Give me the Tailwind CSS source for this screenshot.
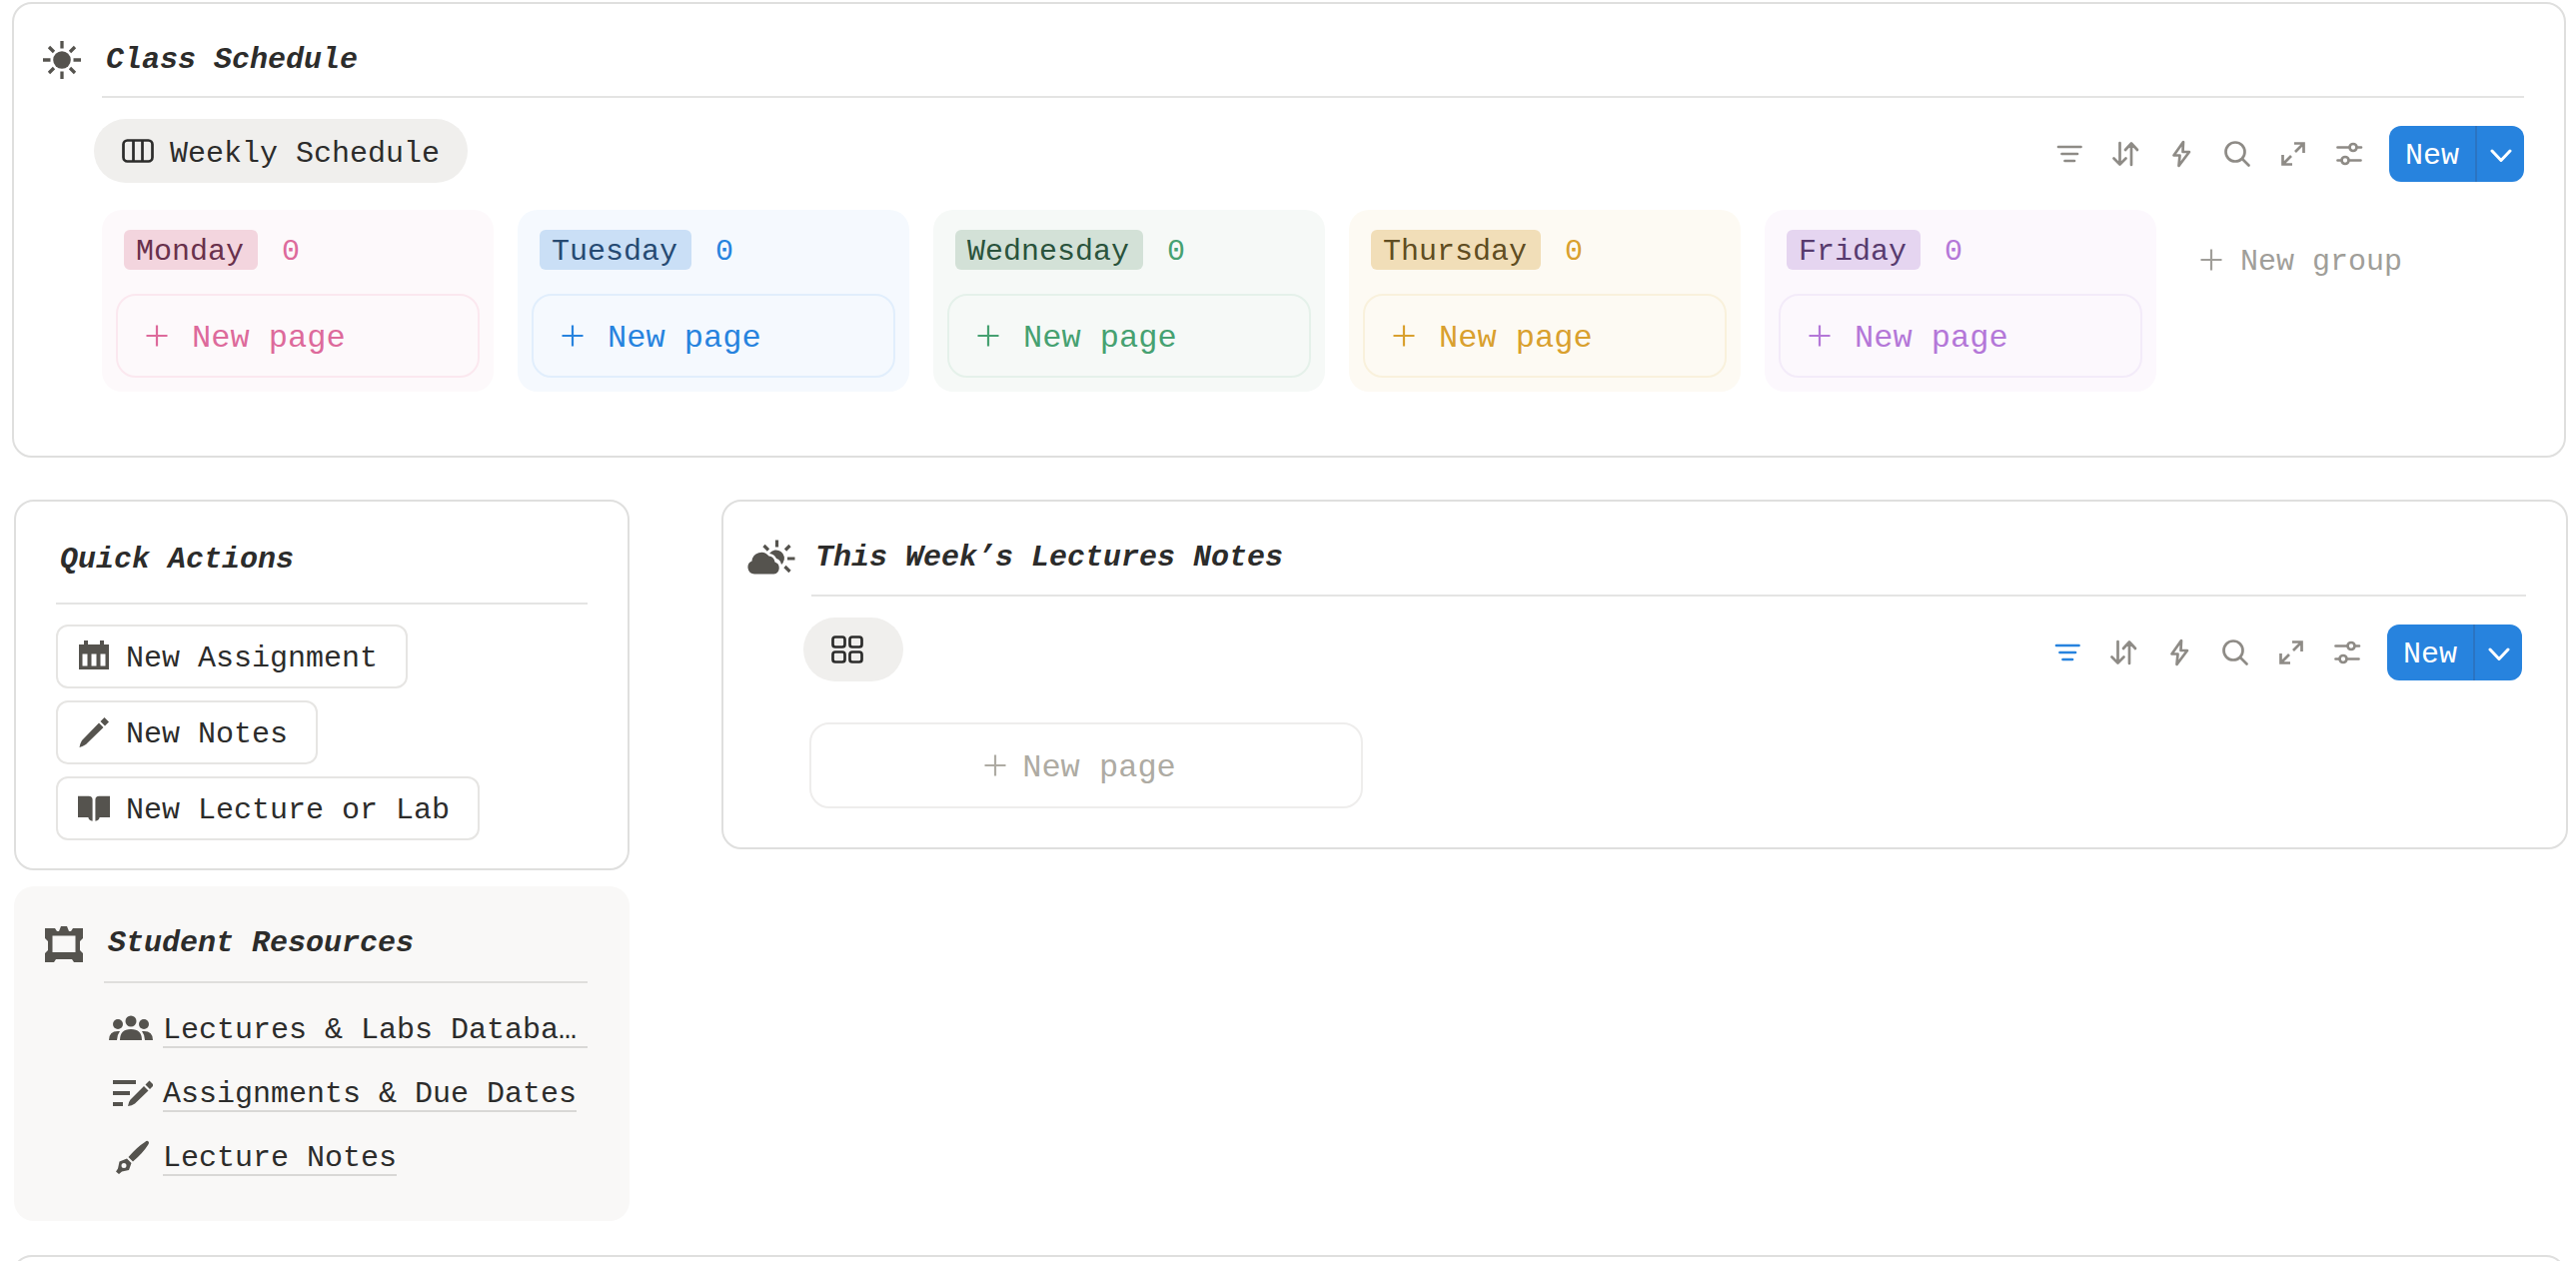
<!DOCTYPE html>
<html lang="en">
<head>
  <meta charset="UTF-8">
  <meta name="viewport" content="width=device-width, initial-scale=1.0">
  <title>Class Dashboard</title>
  <script src="https://cdn.jsdelivr.net/npm/@tailwindcss/browser@4"></script>
</head>
<body class="flex flex-col h-screen overflow-hidden bg-white pt-[2px] text-[#2c2c2b] text-[30px] leading-9 font-['Liberation_Mono',monospace]">

  <!-- shared icons -->
  <svg class="hidden">
    <symbol id="plus" viewBox="0 0 22 22"><path d="M11 0.5v21M0.5 11h21" fill="none" stroke="currentColor" stroke-width="2.2"/></symbol>
    <symbol id="filter" viewBox="0 0 32 32"><path d="M5 9h22.500M8.500 16h15.500M11.500 23h9.500" fill="none" stroke="currentColor" stroke-width="2.7" stroke-linecap="round"/></symbol>
    <symbol id="sort" viewBox="0 0 32 32"><path d="M10.500 5v21M4.500 20.500l6 6 6-6M22 27V5.500M16 12l6-6.500 6 6.500" fill="none" stroke="currentColor" stroke-width="2.7" stroke-linecap="round" stroke-linejoin="round"/></symbol>
    <symbol id="bolt" viewBox="0 0 32 32"><path d="M18 4L8.500 17.500h6L13.500 28 24 14h-6.500z" fill="none" stroke="currentColor" stroke-width="2.7" stroke-linejoin="round"/></symbol>
    <symbol id="search" viewBox="0 0 32 32"><g fill="none" stroke="currentColor" stroke-width="2.7" stroke-linecap="round"><circle cx="14" cy="14" r="9.5"/><path d="M21 21l6.500 6.500"/></g></symbol>
    <symbol id="expand" viewBox="0 0 32 32"><path d="M18 14l8-8M17 5.500h9.500V15M14 18l-8 8M5.500 17v9.500H15" fill="none" stroke="currentColor" stroke-width="2.7"/></symbol>
    <symbol id="sliders" viewBox="0 0 32 32"><g fill="none" stroke="currentColor" stroke-width="2.7" stroke-linecap="round"><path d="M4.500 9.500H16M24 9.500h4M4.500 22.500H8M16 22.500h11.500"/><circle cx="20" cy="9.500" r="3.500"/><circle cx="12" cy="22.500" r="3.500"/></g></symbol>
    <symbol id="chevron" viewBox="0 0 22 22"><path d="M2 6l9 9.500L20 6" fill="none" stroke="currentColor" stroke-width="3" stroke-linecap="round" stroke-linejoin="round"/></symbol>
  </svg>

  <!-- class schedule -->
  <section class="shrink-0 ml-3 mr-[10px] h-[456px] border-2 border-[#dfdfde] rounded-[20px] pl-[88px] pr-10">
    <header class="-ml-[60px] flex items-center gap-[22px] h-[92px] pt-5">
      <svg class="w-10 h-10 text-[#55534e]" viewBox="0 0 40 40"><circle cx="20" cy="20" r="8.8" fill="currentColor"/><path d="M20 1v7.500M20 31.500v7.500M1 20h7.500M31.500 20h7.500M7 7l5 5M28 28l5 5M33 7l-5 5M12 28l-5 5" stroke="currentColor" stroke-width="3.3"/></svg>
      <h2 class="font-bold italic pl-[2px]">Class Schedule</h2>
    </header>
    <hr class="border-0 h-[2px] bg-[#e4e4e3]">

    <div class="flex justify-between mt-[21px]">
      <button class="-ml-2 flex items-center gap-4 h-16 px-7 rounded-full bg-[#f0efed]">
        <svg class="w-8 h-6" viewBox="0 0 32 24"><rect x="1.500" y="1.500" width="29" height="21" rx="4" fill="none" stroke="currentColor" stroke-width="2.700"/><path d="M11.500 1.500v21M20.500 1.500v21" stroke="currentColor" stroke-width="2.700"/></svg>
        <span class="pt-1.5">Weekly Schedule</span>
      </button>
      <div class="flex items-center h-14 mt-[7px] text-[#8e8b86]">
        <button class="flex justify-center w-14" aria-label="Filter"><svg class="size-8"><use href="#filter"/></svg></button>
        <button class="flex justify-center w-14" aria-label="Sort"><svg class="size-8"><use href="#sort"/></svg></button>
        <button class="flex justify-center w-14" aria-label="Automations"><svg class="size-8"><use href="#bolt"/></svg></button>
        <button class="flex justify-center w-14" aria-label="Search"><svg class="size-8"><use href="#search"/></svg></button>
        <button class="flex justify-center w-14" aria-label="Open full page"><svg class="size-8"><use href="#expand"/></svg></button>
        <button class="flex justify-center w-14" aria-label="View settings"><svg class="size-8"><use href="#sliders"/></svg></button>
        <div class="flex h-14 ml-3 rounded-xl overflow-hidden bg-[#2783de] text-white">
          <button class="w-[88px] pt-1 border-r-2 border-[#2b74c2]">New</button>
          <button class="flex items-center justify-center w-[47px] pt-1" aria-label="More new options"><svg class="size-[22px]"><use href="#chevron"/></svg></button>
        </div>
      </div>
    </div>

    <div class="flex gap-6 mt-[27px]">
      <div class="w-[392px] rounded-[20px] bg-[#fdf9fb] px-[14px] pt-5 pb-[14px] text-[#dd6a9b]">
        <div class="flex items-center gap-6 pl-2">
          <span class="pt-1 pl-3 pr-[14px] rounded-md bg-[#f3d5de] text-[#69314c]">Monday</span>
          <span class="pt-1">0</span>
        </div>
        <button class="flex items-center gap-6 w-full h-[84px] mt-6 pl-7 border-2 border-[#fbe8ef] rounded-[20px] text-[32px]">
          <svg class="size-[22px]"><use href="#plus"/></svg><span class="pt-1.5">New page</span>
        </button>
      </div>
      <div class="w-[392px] rounded-[20px] bg-[#f5f9fe] px-[14px] pt-5 pb-[14px] text-[#2783de]">
        <div class="flex items-center gap-6 pl-2">
          <span class="pt-1 pl-3 pr-[14px] rounded-md bg-[#cadff6] text-[#264a72]">Tuesday</span>
          <span class="pt-1">0</span>
        </div>
        <button class="flex items-center gap-6 w-full h-[84px] mt-6 pl-7 border-2 border-[#e1eefc] rounded-[20px] text-[32px]">
          <svg class="size-[22px]"><use href="#plus"/></svg><span class="pt-1.5">New page</span>
        </button>
      </div>
      <div class="w-[392px] rounded-[20px] bg-[#f6f9f7] px-[14px] pt-5 pb-[14px] text-[#46a171]">
        <div class="flex items-center gap-6 pl-2">
          <span class="pt-1 pl-3 pr-[14px] rounded-md bg-[#d3e1d7] text-[#2a533c]">Wednesday</span>
          <span class="pt-1">0</span>
        </div>
        <button class="flex items-center gap-6 w-full h-[84px] mt-6 pl-7 border-2 border-[#e5f1ea] rounded-[20px] text-[32px]">
          <svg class="size-[22px]"><use href="#plus"/></svg><span class="pt-1.5">New page</span>
        </button>
      </div>
      <div class="w-[392px] rounded-[20px] bg-[#fdfaf3] px-[14px] pt-5 pb-[14px] text-[#d9a02e]">
        <div class="flex items-center gap-6 pl-2">
          <span class="pt-1 pl-3 pr-[14px] rounded-md bg-[#f1deb8] text-[#604d22]">Thursday</span>
          <span class="pt-1">0</span>
        </div>
        <button class="flex items-center gap-6 w-full h-[84px] mt-6 pl-7 border-2 border-[#f9f1dc] rounded-[20px] text-[32px]">
          <svg class="size-[22px]"><use href="#plus"/></svg><span class="pt-1.5">New page</span>
        </button>
      </div>
      <div class="w-[392px] rounded-[20px] bg-[#fcf8fd] px-[14px] pt-5 pb-[14px] text-[#b477d8]">
        <div class="flex items-center gap-6 pl-2">
          <span class="pt-1 pl-3 pr-[14px] rounded-md bg-[#e5d5f0] text-[#573b6e]">Friday</span>
          <span class="pt-1">0</span>
        </div>
        <button class="flex items-center gap-6 w-full h-[84px] mt-6 pl-7 border-2 border-[#f3ebf9] rounded-[20px] text-[32px]">
          <svg class="size-[22px]"><use href="#plus"/></svg><span class="pt-1.5">New page</span>
        </button>
      </div>
      <button class="flex items-center gap-[18px] h-10 ml-5 mt-[30px] text-[#a09e99]">
        <svg class="size-[22px]"><use href="#plus"/></svg><span class="pt-1">New group</span>
      </button>
    </div>
  </section>

  <div class="shrink-0 flex items-start gap-[92px] mt-[42px] ml-[14px] mr-2">
    <div class="w-[616px] shrink-0">
      <!-- quick actions -->
      <section class="border-2 border-[#dfdfde] rounded-[20px] px-10 pb-7">
        <h2 class="font-bold italic pt-10 pb-[25px] pl-1">Quick Actions</h2>
        <hr class="border-0 h-[2px] bg-[#e4e4e3]">
        <div class="flex flex-col items-start gap-3 mt-5">
          <button class="flex items-center gap-4 h-16 pl-5 pr-7 border-2 border-[#e6e5e3] rounded-xl">
            <svg class="w-8 h-8 text-[#55534e]" viewBox="0 0 32 32"><path fill="currentColor" fill-rule="evenodd" d="M1 4h5V0h4v4h12V0h4v4h5v25H1zM4.500 13.500v12h5v-12zM13.500 13.500v12h5v-12zM22.500 13.500v12h5v-12z"/></svg>
            <span class="pt-1">New Assignment</span>
          </button>
          <button class="flex items-center gap-4 h-16 pl-5 pr-7 border-2 border-[#e6e5e3] rounded-xl">
            <svg class="w-8 h-8 text-[#55534e]" viewBox="0 0 32 32"><path fill="currentColor" d="M26.500 1l4.500 4.500-4 4L22.500 5zM21 6.500l4.500 4.500L8 28Q5 30 1.500 31 2 27 4 24z"/></svg>
            <span class="pt-1">New Notes</span>
          </button>
          <button class="flex items-center gap-4 h-16 pl-5 pr-7 border-2 border-[#e6e5e3] rounded-xl">
            <svg class="w-8 h-8 text-[#55534e]" viewBox="0 0 34 32"><path fill="currentColor" d="M0 3h11.500q4 0 4 4v22.500q-4-.5-4.500-4H0zM34 3H22.500q-4 0-4 4v22.500q4-.5 4.500-4h11z"/></svg>
            <span class="pt-1">New Lecture or Lab</span>
          </button>
        </div>
      </section>

      <!-- student resources -->
      <section class="mt-4 rounded-[20px] bg-[#f9f8f7] pl-[90px] pr-[42px] pb-[45px]">
        <header class="-ml-[60px] flex items-center gap-[22px] h-[95px] pt-[18px]">
          <svg class="w-10 h-10 text-[#55534e]" viewBox="0 0 40 40"><path fill="currentColor" fill-rule="evenodd" d="M1 5h10l2 3h2l2-5h6l2 5h2l2-3h10v10l-3 3v9l3 3v9H30l-2-3H12l-2 3H1v-9l3-3v-9l-3-3zM8.500 12.500v16.500h23V12.500z"/></svg>
          <h2 class="font-bold italic pl-[2px]">Student Resources</h2>
        </header>
        <hr class="border-0 h-[2px] bg-[#dfdedc]">
        <ul class="flex flex-col gap-6 mt-[25px] pl-[5px] leading-8">
          <li class="flex items-center gap-[10px]">
            <svg class="w-11 h-10 shrink-0 text-[#55534e]" viewBox="0 0 44 40"><g fill="currentColor"><circle cx="22" cy="13" r="5.500"/><circle cx="9" cy="16" r="5"/><circle cx="35" cy="16" r="5"/><path d="M11 32q0-11 11-11t11 11zM0 32q0-9 9-9h2q-3 4-3 9zM44 32q0-9-9-9h-2q3 4 3 9z"/></g></svg>
            <a href="#" class="flex-1 pt-1.5 border-b-2 border-[#d9d8d6]">Lectures &amp; Labs Databa…</a>
          </li>
          <li class="flex items-center gap-[10px]">
            <svg class="w-11 h-10 shrink-0 text-[#55534e]" viewBox="0 0 44 40"><path fill="currentColor" d="M4 8h23v4H4zM4 19h17v4H4zM4 30h10v4H4zM40.500 8.500L45 13l-4 4-4.500-4.500zM35 14l4.500 4.500L26 31.500Q23 33.500 19 34q.5-4 2.500-6.500z"/></svg>
            <a href="#" class="pt-1.5 border-b-2 border-[#d9d8d6]">Assignments &amp; Due Dates</a>
          </li>
          <li class="flex items-center gap-[10px]">
            <svg class="w-11 h-10 shrink-0 text-[#55534e]" viewBox="0 0 44 40"><path fill="currentColor" fill-rule="evenodd" d="M39 5q2 1 0 4-5 8-15 16.500L19.500 21Q28 11 36 6q2-2 3-1zM18 22.500l4.500 4.500-2.500 7-7 1.500-3 2.500L7 35.500l2-3 1.500-7zM15 27a2.500 2.500 0 100 5 2.500 2.500 0 100-5z"/></svg>
            <a href="#" class="pt-1.5 border-b-2 border-[#d9d8d6]">Lecture Notes</a>
          </li>
        </ul>
      </section>
    </div>

    <!-- lecture notes -->
    <section class="flex-1 h-[350px] border-2 border-[#dfdfde] rounded-[20px] pl-[88px] pr-10">
      <header class="-ml-16 flex items-center gap-5 h-[93px] pt-[18px]">
        <svg class="w-12 h-10 text-[#55534e]" viewBox="0 0 48 40">
          <path fill="currentColor" d="M7 36.500a6.800 6.800 0 01-2.500-13 9.500 9.500 0 0117-5q5 .5 6 6a6.200 6.200 0 01-1 12z"/>
          <path fill="currentColor" d="M22 16a8 8 0 1113.500 9.500l-1.500 1.500q-1-5-5-6-2-4.500-7-5z"/>
          <path d="M29.500 2.500v7M16.500 8l4.500 4.500M42.500 8L38 12.500M40 21h7.500M37.500 29l5 5" stroke="currentColor" stroke-width="3.2"/>
        </svg>
        <h2 class="font-bold italic">This Week’s Lectures Notes</h2>
      </header>
      <hr class="border-0 h-[2px] bg-[#e4e4e3]">
      <div class="flex justify-between mt-[21px] mr-1">
        <button class="-ml-2 flex items-center w-[100px] h-16 px-7 rounded-full bg-[#f0efed]" aria-label="Gallery view">
          <svg class="size-8" viewBox="0 0 32 32"><g fill="none" stroke="currentColor" stroke-width="2.700"><rect x="1.500" y="3.500" width="12" height="10" rx="2.500"/><rect x="18.500" y="3.500" width="12" height="10" rx="2.500"/><rect x="1.500" y="18.500" width="12" height="10" rx="2.500"/><rect x="18.500" y="18.500" width="12" height="10" rx="2.500"/></g></svg>
        </button>
        <div class="flex items-center h-14 mt-[7px] text-[#8e8b86]">
          <button class="flex justify-center w-14 text-[#2783de]" aria-label="Filter"><svg class="size-8"><use href="#filter"/></svg></button>
          <button class="flex justify-center w-14" aria-label="Sort"><svg class="size-8"><use href="#sort"/></svg></button>
          <button class="flex justify-center w-14" aria-label="Automations"><svg class="size-8"><use href="#bolt"/></svg></button>
          <button class="flex justify-center w-14" aria-label="Search"><svg class="size-8"><use href="#search"/></svg></button>
          <button class="flex justify-center w-14" aria-label="Open full page"><svg class="size-8"><use href="#expand"/></svg></button>
          <button class="flex justify-center w-14" aria-label="View settings"><svg class="size-8"><use href="#sliders"/></svg></button>
          <div class="flex h-14 ml-3 rounded-xl overflow-hidden bg-[#2783de] text-white">
            <button class="w-[88px] pt-1 border-r-2 border-[#2b74c2]">New</button>
            <button class="flex items-center justify-center w-[47px] pt-1" aria-label="More new options"><svg class="size-[22px]"><use href="#chevron"/></svg></button>
          </div>
        </div>
      </div>
      <button class="flex items-center justify-center gap-4 w-[554px] h-[86px] -ml-[2px] mt-[41px] pr-3 border-2 border-[#eeedec] rounded-[20px] text-[32px] text-[#aeaba3]">
        <svg class="size-[22px]"><use href="#plus"/></svg><span class="pt-1.5">New page</span>
      </button>
    </section>
  </div>

  <section class="shrink-0 h-40 mt-[34px] ml-3 mr-[10px] border-2 border-[#dfdfde] rounded-[20px]"></section>
</body>
</html>
